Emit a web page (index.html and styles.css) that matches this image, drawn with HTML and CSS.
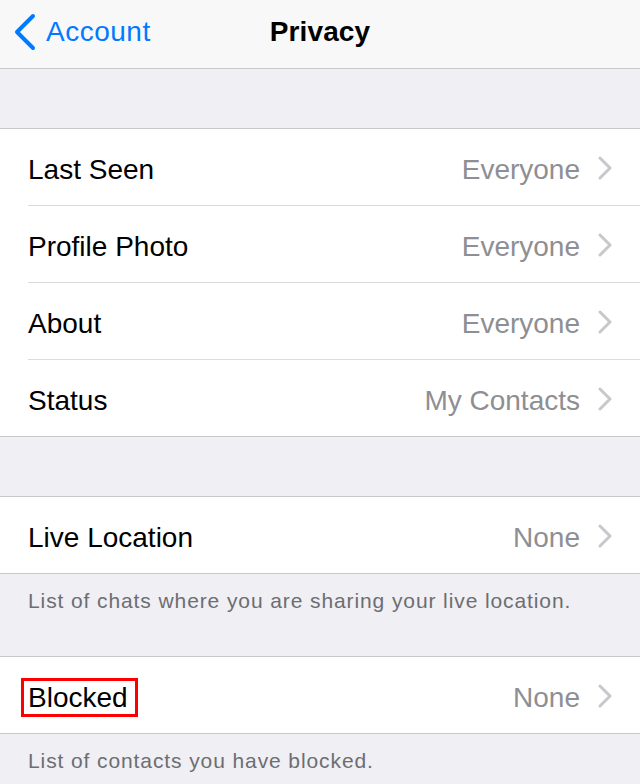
FILE: index.html
```html
<!DOCTYPE html>
<html lang="en">
<head>
  <meta charset="UTF-8" />
  <meta name="viewport" content="width=device-width, initial-scale=1" />
  <title>Privacy</title>
  <link rel="stylesheet" href="styles.css">
</head>
<body>
  <!-- Navigation bar -->
  <div class="navbar">
    <a class="back" href="#">
      <svg class="back-icon" viewBox="0 0 26 40" width="26" height="40">
        <path d="M21 4 L5 20 L21 36" fill="none" stroke="#007aff" stroke-width="4" stroke-linecap="round" stroke-linejoin="round"/>
      </svg>
      <span>Account</span>
    </a>
    <div class="title">Privacy</div>
  </div>

  <div class="spacer"></div>

  <div class="group">
    <div class="row">
      <div class="label"><span>Last Seen</span></div>
      <span class="value">Everyone</span>
      <svg class="chevron" viewBox="0 0 14 24" width="14" height="24"><path d="M2 2 L12 12 L2 22" /></svg>
    </div>
    <div class="row">
      <div class="label"><span>Profile Photo</span></div>
      <span class="value">Everyone</span>
      <svg class="chevron" viewBox="0 0 14 24" width="14" height="24"><path d="M2 2 L12 12 L2 22" /></svg>
    </div>
    <div class="row">
      <div class="label"><span>About</span></div>
      <span class="value">Everyone</span>
      <svg class="chevron" viewBox="0 0 14 24" width="14" height="24"><path d="M2 2 L12 12 L2 22" /></svg>
    </div>
    <div class="row">
      <div class="label"><span>Status</span></div>
      <span class="value">My Contacts</span>
      <svg class="chevron" viewBox="0 0 14 24" width="14" height="24"><path d="M2 2 L12 12 L2 22" /></svg>
    </div>
  </div>

  <div class="spacer"></div>

  <div class="group">
    <div class="row">
      <div class="label"><span>Live Location</span></div>
      <span class="value">None</span>
      <svg class="chevron" viewBox="0 0 14 24" width="14" height="24"><path d="M2 2 L12 12 L2 22" /></svg>
    </div>
  </div>
  <div class="footer">List of chats where you are sharing your live location.</div>

  <div class="group">
    <div class="row">
      <div class="label"><span class="highlighted">Blocked</span></div>
      <span class="value">None</span>
      <svg class="chevron" viewBox="0 0 14 24" width="14" height="24"><path d="M2 2 L12 12 L2 22" /></svg>
    </div>
  </div>
  <div class="footer">List of contacts you have blocked.</div>
</body>
</html>
```

FILE: styles.css
```css
* {
  margin: 0;
  padding: 0;
  box-sizing: border-box;
}

body {
  background-color: #efeff4;
  font-family: "Liberation Sans", Arial, sans-serif;
  color: #000;
  overflow: hidden;
}

/* Top navigation bar */
.navbar {
  position: relative;
  height: 69px;
  background-color: #f8f8f8;
  border-bottom: 1px solid #c8c7cc;
  display: flex;
  align-items: center;
  justify-content: center;
  padding-bottom: 4px;
}

.back {
  position: absolute;
  left: 12px;
  top: 12px;
  display: flex;
  align-items: center;
  gap: 8px;
  color: #007aff;
  text-decoration: none;
  font-size: 28px;
  letter-spacing: 0.5px;
}

.back-icon {
  display: block;
}

.title {
  font-size: 28px;
  font-weight: bold;
  letter-spacing: 0.1px;
}

.spacer {
  height: 59px;
}

/* Grouped table sections */
.group {
  background-color: #fff;
  border-top: 1px solid #c8c7cc;
  border-bottom: 1px solid #c8c7cc;
  padding-left: 28px;
}

.row {
  height: 76px;
  display: flex;
  align-items: center;
  padding-right: 28px;
  padding-top: 5px;
}

/* inset separator between rows */
.row + .row {
  border-top: 1px solid #dcdce0;
  height: 77px;
}

.label {
  flex: 1;
  font-size: 28px;
}

.highlighted {
  display: inline-block;
  margin-left: -7px;
  padding: 0 7px 0 4px;
  border: 3px solid #ff0000;
  line-height: 33px;
}

.value {
  font-size: 28px;
  color: #8e8e93;
}

.chevron {
  display: block;
  margin-left: 18px;
  margin-top: -4px;
  fill: none;
  stroke: #c7c7cc;
  stroke-width: 3;
  stroke-linecap: round;
  stroke-linejoin: round;
}

.footer {
  padding: 14px 28px 0;
  height: 82px;
  font-size: 21px;
  letter-spacing: 0.9px;
  line-height: 25px;
  color: #6d6d72;
}
```
